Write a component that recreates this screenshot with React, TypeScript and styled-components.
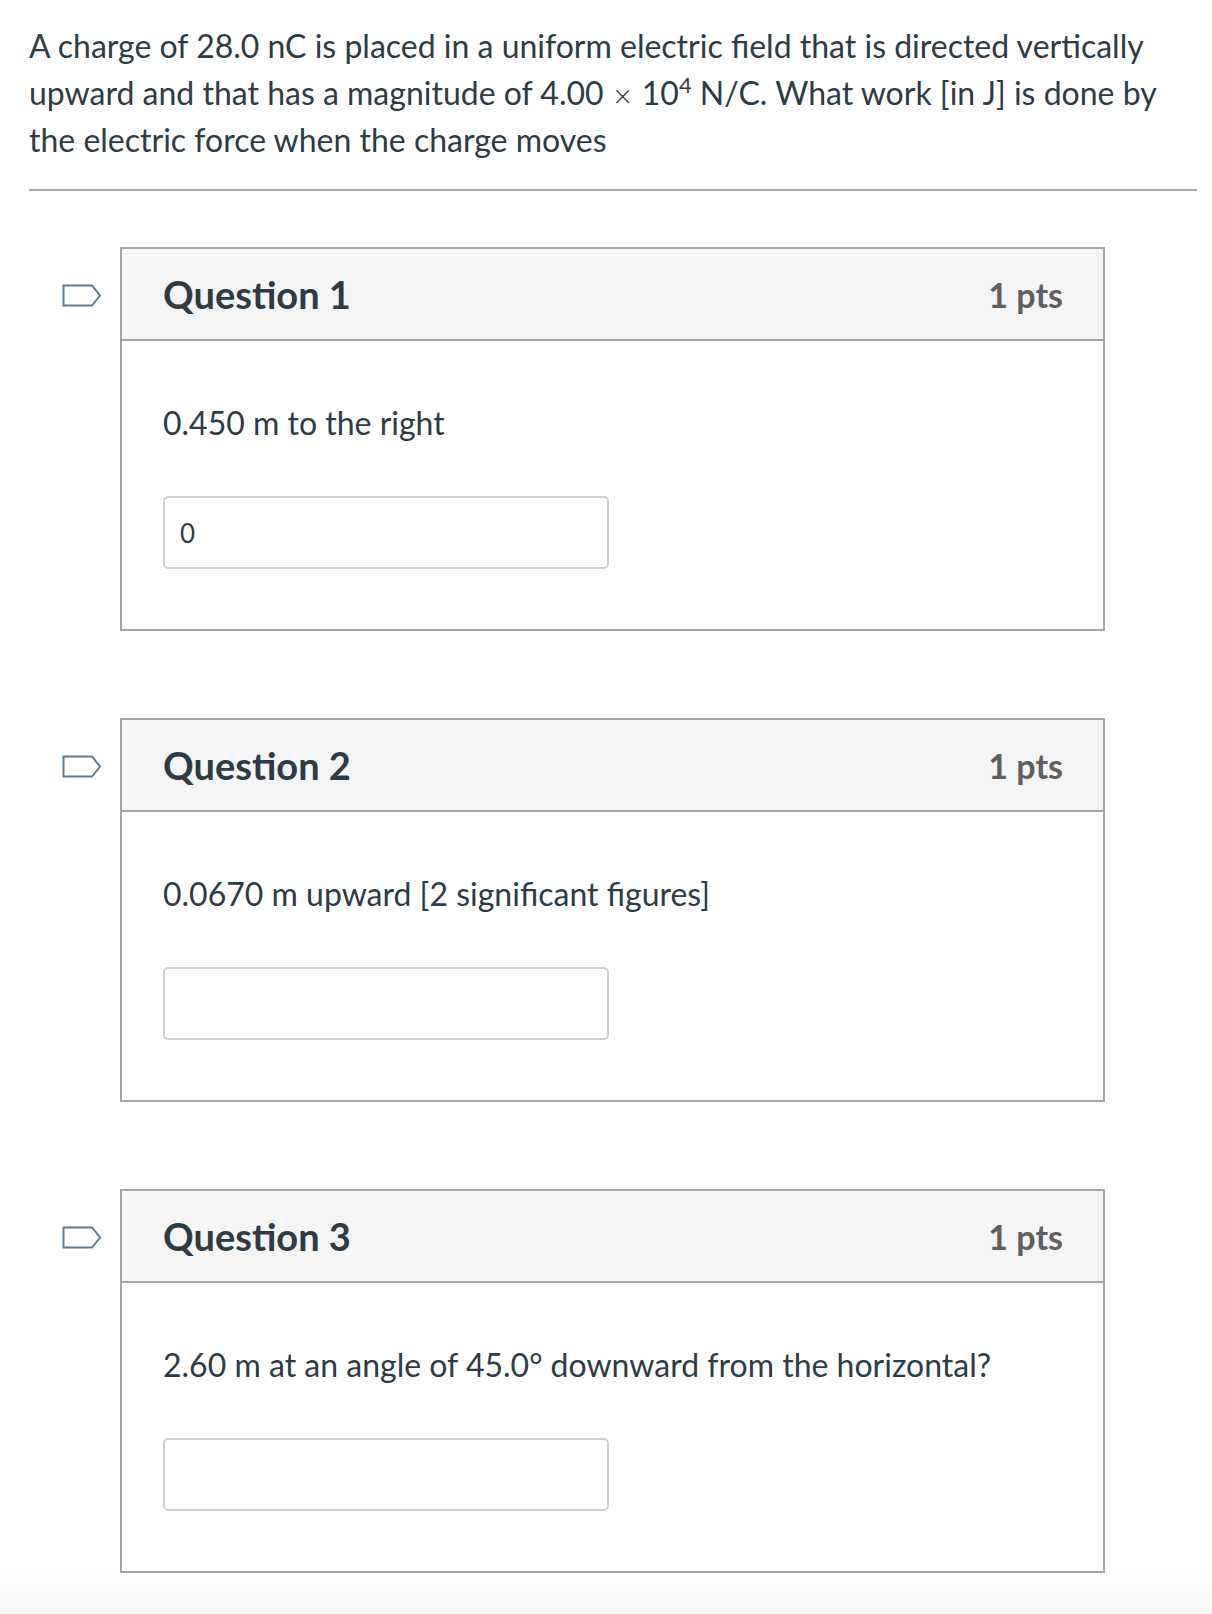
import React from 'react';
import styled, { createGlobalStyle } from 'styled-components';

const GlobalStyle = createGlobalStyle`
  body {
    margin: 0;
    background: #ffffff;
    font-family: Lato, "Noto Sans", sans-serif;
    color: #2d3b45;
  }
`;

const Page = styled.div`
  padding: 22px 15px 0 29px;
`;

const Prompt = styled.p`
  margin: 0;
  font-size: 32px;
  line-height: 47px;
`;

const Sup = styled.span`
  font-size: 22px;
  line-height: 1;
  vertical-align: 12px;
`;

const Times = styled.span`
  font-family: "DejaVu Sans", sans-serif;
  font-size: 26px;
  font-weight: 300;
  line-height: 1;
`;

const Rule = styled.hr`
  margin: 26px 0 0;
  border: none;
  height: 2px;
  background: #a8a8a8;
`;

const QuestionList = styled.div`
  display: flex;
  flex-direction: column;
  gap: 87px;
  margin-top: 56px;
`;

const Row = styled.div`
  display: flex;
`;

const FlagCol = styled.div`
  width: 91px;
  flex: none;
  padding: 37px 0 0 33px;
  box-sizing: border-box;
`;

const Box = styled.div`
  width: 985px;
  border: 2px solid #a5a5a5;
  box-sizing: border-box;
`;

const Header = styled.div`
  height: 92px;
  box-sizing: border-box;
  display: flex;
  align-items: center;
  justify-content: space-between;
  padding: 0 40px 0 41px;
  background: #f5f5f5;
  border-bottom: 2px solid #a5a5a5;
`;

const Title = styled.h2`
  margin: 0;
  font-size: 38px;
  font-weight: 700;
  color: #2d3b45;
`;

const Points = styled.span`
  font-size: 34px;
  font-weight: 700;
  color: #5f5f5f;
`;

const Body = styled.div`
  padding: 58px 41px 60px;
`;

const QuestionText = styled.p`
  margin: 0;
  font-size: 32px;
  line-height: 47px;
`;

const Answer = styled.input`
  display: block;
  margin-top: 50px;
  width: 446px;
  height: 73px;
  box-sizing: border-box;
  border: 2px solid #cfcfcf;
  border-radius: 5px;
  padding: 0 15px;
  font-family: Lato, "Noto Sans", sans-serif;
  font-size: 26px;
  color: #2d3b45;
  background: #fff;
  outline: none;
`;

const Footer = styled.div`
  height: 41px;
  background: linear-gradient(to bottom, #ffffff, #f6f6f6);
`;

const Flag = () => (
  <svg width="40" height="23" viewBox="0 0 40 23">
    <path
      d="M1.5 1.5 H30 L38 11.5 L30 21.5 H1.5 Z"
      fill="none"
      stroke="#5b7b98"
      strokeWidth="2"
      strokeLinejoin="miter"
    />
  </svg>
);

const questions = [
  { n: 1, text: '0.450 m to the right', value: '0' },
  { n: 2, text: '0.0670 m upward [2 significant figures]', value: '' },
  { n: 3, text: '2.60 m at an angle of 45.0° downward from the horizontal?', value: '' },
];

const App = () => (
  <>
    <GlobalStyle />
    <Page>
      <Prompt>
        A charge of 28.0 nC is placed in a uniform electric field that is directed vertically
        upward and that has a magnitude of 4.00 <Times>×</Times> 10<Sup>4</Sup> N/C. What work [in J]
        is done by the electric force when the charge moves
      </Prompt>
      <Rule />
      <QuestionList>
        {questions.map((q) => (
          <Row key={q.n}>
            <FlagCol>
              <Flag />
            </FlagCol>
            <Box>
              <Header>
                <Title>Question {q.n}</Title>
                <Points>1 pts</Points>
              </Header>
              <Body>
                <QuestionText>{q.text}</QuestionText>
                <Answer type="text" defaultValue={q.value} readOnly />
              </Body>
            </Box>
          </Row>
        ))}
      </QuestionList>
    </Page>
    <Footer />
  </>
);

export default App;
